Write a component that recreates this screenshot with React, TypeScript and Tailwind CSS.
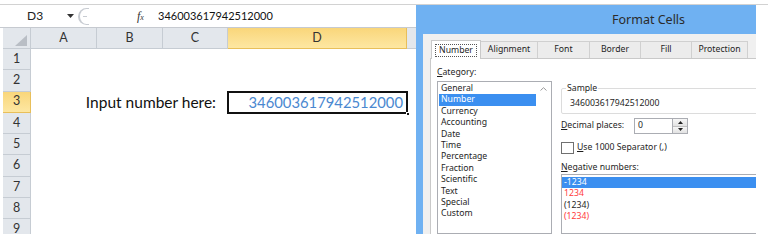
import React from "react";

const rows = [1, 2, 3, 4, 5, 6, 7, 8, 9];
const categories = [
  "General",
  "Number",
  "Currency",
  "Accounting",
  "Date",
  "Time",
  "Percentage",
  "Fraction",
  "Scientific",
  "Text",
  "Special",
  "Custom",
];

function Tab({ label, w, active }: { label: string; w: string; active?: boolean }) {
  if (active) {
    return (
      <div className={`${w} shrink-0 h-[19px] bg-white border border-b-0 border-[#c9c9c9] flex items-center justify-center relative z-10 -mb-px`}>
        <span className="border border-dotted border-[#555] px-[3px] leading-[11px]">{label}</span>
      </div>
    );
  }
  return (
    <div className={`${w} shrink-0 h-[17px] bg-[#ececec] border border-l-0 border-b-0 border-[#d0d0d0] flex items-center justify-center`}>
      {label}
    </div>
  );
}

export default function App() {
  return (
    <div className="w-[768px] h-[234px] bg-white overflow-hidden flex flex-col">
      <div className="h-[4px] bg-white shrink-0" />
      <div className="h-px bg-[#d2d2d2] shrink-0" />
      <div className="flex flex-1 min-h-0">
        {/* Spreadsheet */}
        <div className="w-[416px] shrink-0 flex flex-col font-['Lato',sans-serif] text-[#222]">
          {/* formula bar */}
          <div className="h-[22px] shrink-0 flex items-center bg-white">
            <div className="w-[65px] shrink-0 pl-[27px] text-[12px]">D3</div>
            <div className="w-[10px] shrink-0 flex justify-center">
              <svg width="7" height="4" viewBox="0 0 7 4">
                <path d="M0 0 L7 0 L3.5 4 Z" fill="#333" />
              </svg>
            </div>
            <div className="ml-[3px] w-[11px] shrink-0 h-[17px] rounded-l-full border-l-2 border-y border-[#c8ccd2] flex items-center justify-center">
              <div className="w-[4px] h-px bg-[#c8ccd2]" />
            </div>
            <div className="ml-[48px] w-[12px] shrink-0 font-['Liberation_Serif',serif] italic text-[12px] text-[#333] leading-none">
              f<span className="text-[8px]">x</span>
            </div>
            <div className="ml-[9px] text-[11px] text-[#111]">346003617942512000</div>
          </div>
          <div className="h-px shrink-0 bg-[#c6cad0]" />
          {/* column headers */}
          <div className="h-[21px] shrink-0 flex bg-white">
            <div className="ml-[3px] w-[28px] bg-[#e3e7ec] border-r border-b border-[#c6ccd3] relative">
              <svg className="absolute right-[3px] bottom-[2px]" width="12" height="11" viewBox="0 0 12 11">
                <path d="M12 0 L12 11 L0 11 Z" fill="#b9bec5" />
              </svg>
            </div>
            <div className="w-[66px] bg-[#e3e7ec] border-r border-b border-[#c6ccd3] flex items-center justify-center text-[12.5px] text-[#333]">A</div>
            <div className="w-[66px] bg-[#e3e7ec] border-r border-b border-[#c6ccd3] flex items-center justify-center text-[12.5px] text-[#333]">B</div>
            <div className="w-[65px] bg-[#e3e7ec] border-r border-b border-[#c6ccd3] flex items-center justify-center text-[12.5px] text-[#333]">C</div>
            <div className="w-[179px] bg-gradient-to-b from-[#f9d67a] to-[#fde7a2] border-r border-b border-[#e8bf5a] flex items-center justify-center text-[12.5px] text-[#333]">D</div>
            <div className="flex-1 bg-[#e3e7ec] border-b border-[#c6ccd3]" />
          </div>
          {/* rows */}
          {rows.map((r) => (
            <div key={r} className="h-[21.3px] shrink-0 flex">
              <div
                className={`ml-[3px] w-[28px] border-r border-b flex items-center justify-center text-[12.5px] text-[#333] ${
                  r === 3
                    ? "bg-gradient-to-b from-[#f9d67a] to-[#fde7a2] border-[#e8bf5a]"
                    : "bg-[#e3e7ec] border-[#c6ccd3]"
                }`}
              >
                {r}
              </div>
              {r === 3 ? (
                <>
                  <div className="w-[197px] flex items-center justify-end pr-[12px] whitespace-nowrap text-[15.5px] text-[#111]">
                    Input number here:
                  </div>
                  <div className="w-[179px] relative flex items-center justify-end pr-[4px] text-[14.8px] text-[#4a88d0]">
                    346003617942512000
                    <div className="absolute -left-px -top-[1px] -right-px -bottom-px border-2 border-[#111]" />
                    <div className="absolute -right-[3px] -bottom-[3px] w-[4px] h-[4px] bg-[#111] border border-white" />
                  </div>
                </>
              ) : null}
            </div>
          ))}
        </div>

        {/* Format Cells dialog */}
        <div className="w-[340px] shrink-0 flex flex-col bg-[#6fb1f2] font-['Noto_Sans',sans-serif] text-[8.7px] text-[#1e1e1e] overflow-hidden">
          <div className="h-[29px] shrink-0 flex items-center pl-[196px] pt-[2px] text-[12.5px] text-[#2b2b2b]">
            Format Cells
          </div>
          <div className="flex-1 flex min-h-0">
            <div className="w-[7px] shrink-0 bg-[#6fb1f2]" />
            <div className="w-[400px] shrink-0 bg-[#f0f0f0] pl-[7px] pt-[6px] flex flex-col min-h-0">
              <div className="flex items-end pl-[1px]">
                <Tab label="Number" w="w-[50px]" active />
                <Tab label="Alignment" w="w-[57px]" />
                <Tab label="Font" w="w-[52px]" />
                <Tab label="Border" w="w-[51px]" />
                <Tab label="Fill" w="w-[51px]" />
                <Tab label="Protection" w="w-[56px]" />
              </div>
              <div className="flex-1 bg-white border-l border-t border-[#c9c9c9] flex pl-[6px] gap-[9px]">
                {/* left column */}
                <div className="w-[115px] shrink-0 flex flex-col">
                  <div className="mt-[7px] h-[12px] leading-[12px]">
                    <u>C</u>ategory:
                  </div>
                  <div className="mt-[3px] flex-1 border border-[#abadb3] flex pt-[1px]">
                    <div className="flex-1 pl-px">
                      {categories.map((c) => (
                        <div
                          key={c}
                          className={`h-[11.4px] leading-[11.4px] pl-[2px] ${
                            c === "Number" ? "bg-[#3b8ff0] text-white" : ""
                          }`}
                        >
                          {c}
                        </div>
                      ))}
                    </div>
                    <div className="w-[15px] flex justify-center pt-[4px]">
                      <svg width="7" height="4" viewBox="0 0 7 4">
                        <path d="M0.5 3.5 L3.5 0.7 L6.5 3.5" stroke="#9a9a9a" strokeWidth="1" fill="none" />
                      </svg>
                    </div>
                  </div>
                </div>
                {/* right column */}
                <div className="w-[260px] shrink-0 flex flex-col">
                  <div className="mt-[29px] h-[26px] border border-[#dcdcdc] rounded-[2px] relative pl-[8px] pt-[8px]">
                    <span className="absolute -top-[7px] left-[4px] bg-white px-[1px] leading-[12px]">Sample</span>
                    <div className="leading-[12px]">346003617942512000</div>
                  </div>
                  <div className="mt-[4px] h-[16px] flex items-center">
                    <div className="w-[73px]">
                      <u>D</u>ecimal places:
                    </div>
                    <div className="w-[39px] h-[16px] border border-[#abadb3] flex items-center pl-[3px]">0</div>
                    <div className="w-[15px] h-[16px] border border-l-0 border-[#abadb3] flex flex-col">
                      <div className="flex-1 bg-gradient-to-b from-[#f7f7f7] to-[#e2e2e2] border-b border-[#c0c0c0] flex items-center justify-center">
                        <svg width="5" height="3" viewBox="0 0 5 3">
                          <path d="M0 3 L2.5 0 L5 3 Z" fill="#222" />
                        </svg>
                      </div>
                      <div className="flex-1 bg-gradient-to-b from-[#f7f7f7] to-[#e2e2e2] flex items-center justify-center">
                        <svg width="5" height="3" viewBox="0 0 5 3">
                          <path d="M0 0 L5 0 L2.5 3 Z" fill="#222" />
                        </svg>
                      </div>
                    </div>
                  </div>
                  <div className="mt-[8px] h-[12px] flex items-center">
                    <div className="w-[13px] h-[12px] border border-[#707070] bg-white" />
                    <div className="ml-[3px]">
                      <u>U</u>se 1000 Separator (,)
                    </div>
                  </div>
                  <div className="mt-[7px] h-[12px] leading-[12px]">
                    <u>N</u>egative numbers:
                  </div>
                  <div className="mt-[1px] flex-1 border border-[#abadb3] pt-[2px]">
                    <div className="h-[11.4px] leading-[11.4px] pl-[2px] bg-[#3b8ff0] text-white">-1234</div>
                    <div className="h-[11.4px] leading-[11.4px] pl-[2px] text-[#ff3b3b]">1234</div>
                    <div className="h-[11.4px] leading-[11.4px] pl-[2px]">(1234)</div>
                    <div className="h-[11.4px] leading-[11.4px] pl-[2px] text-[#ff3b3b]">(1234)</div>
                  </div>
                </div>
              </div>
            </div>
          </div>
        </div>
        <div className="flex-1 bg-white" />
      </div>
    </div>
  );
}
